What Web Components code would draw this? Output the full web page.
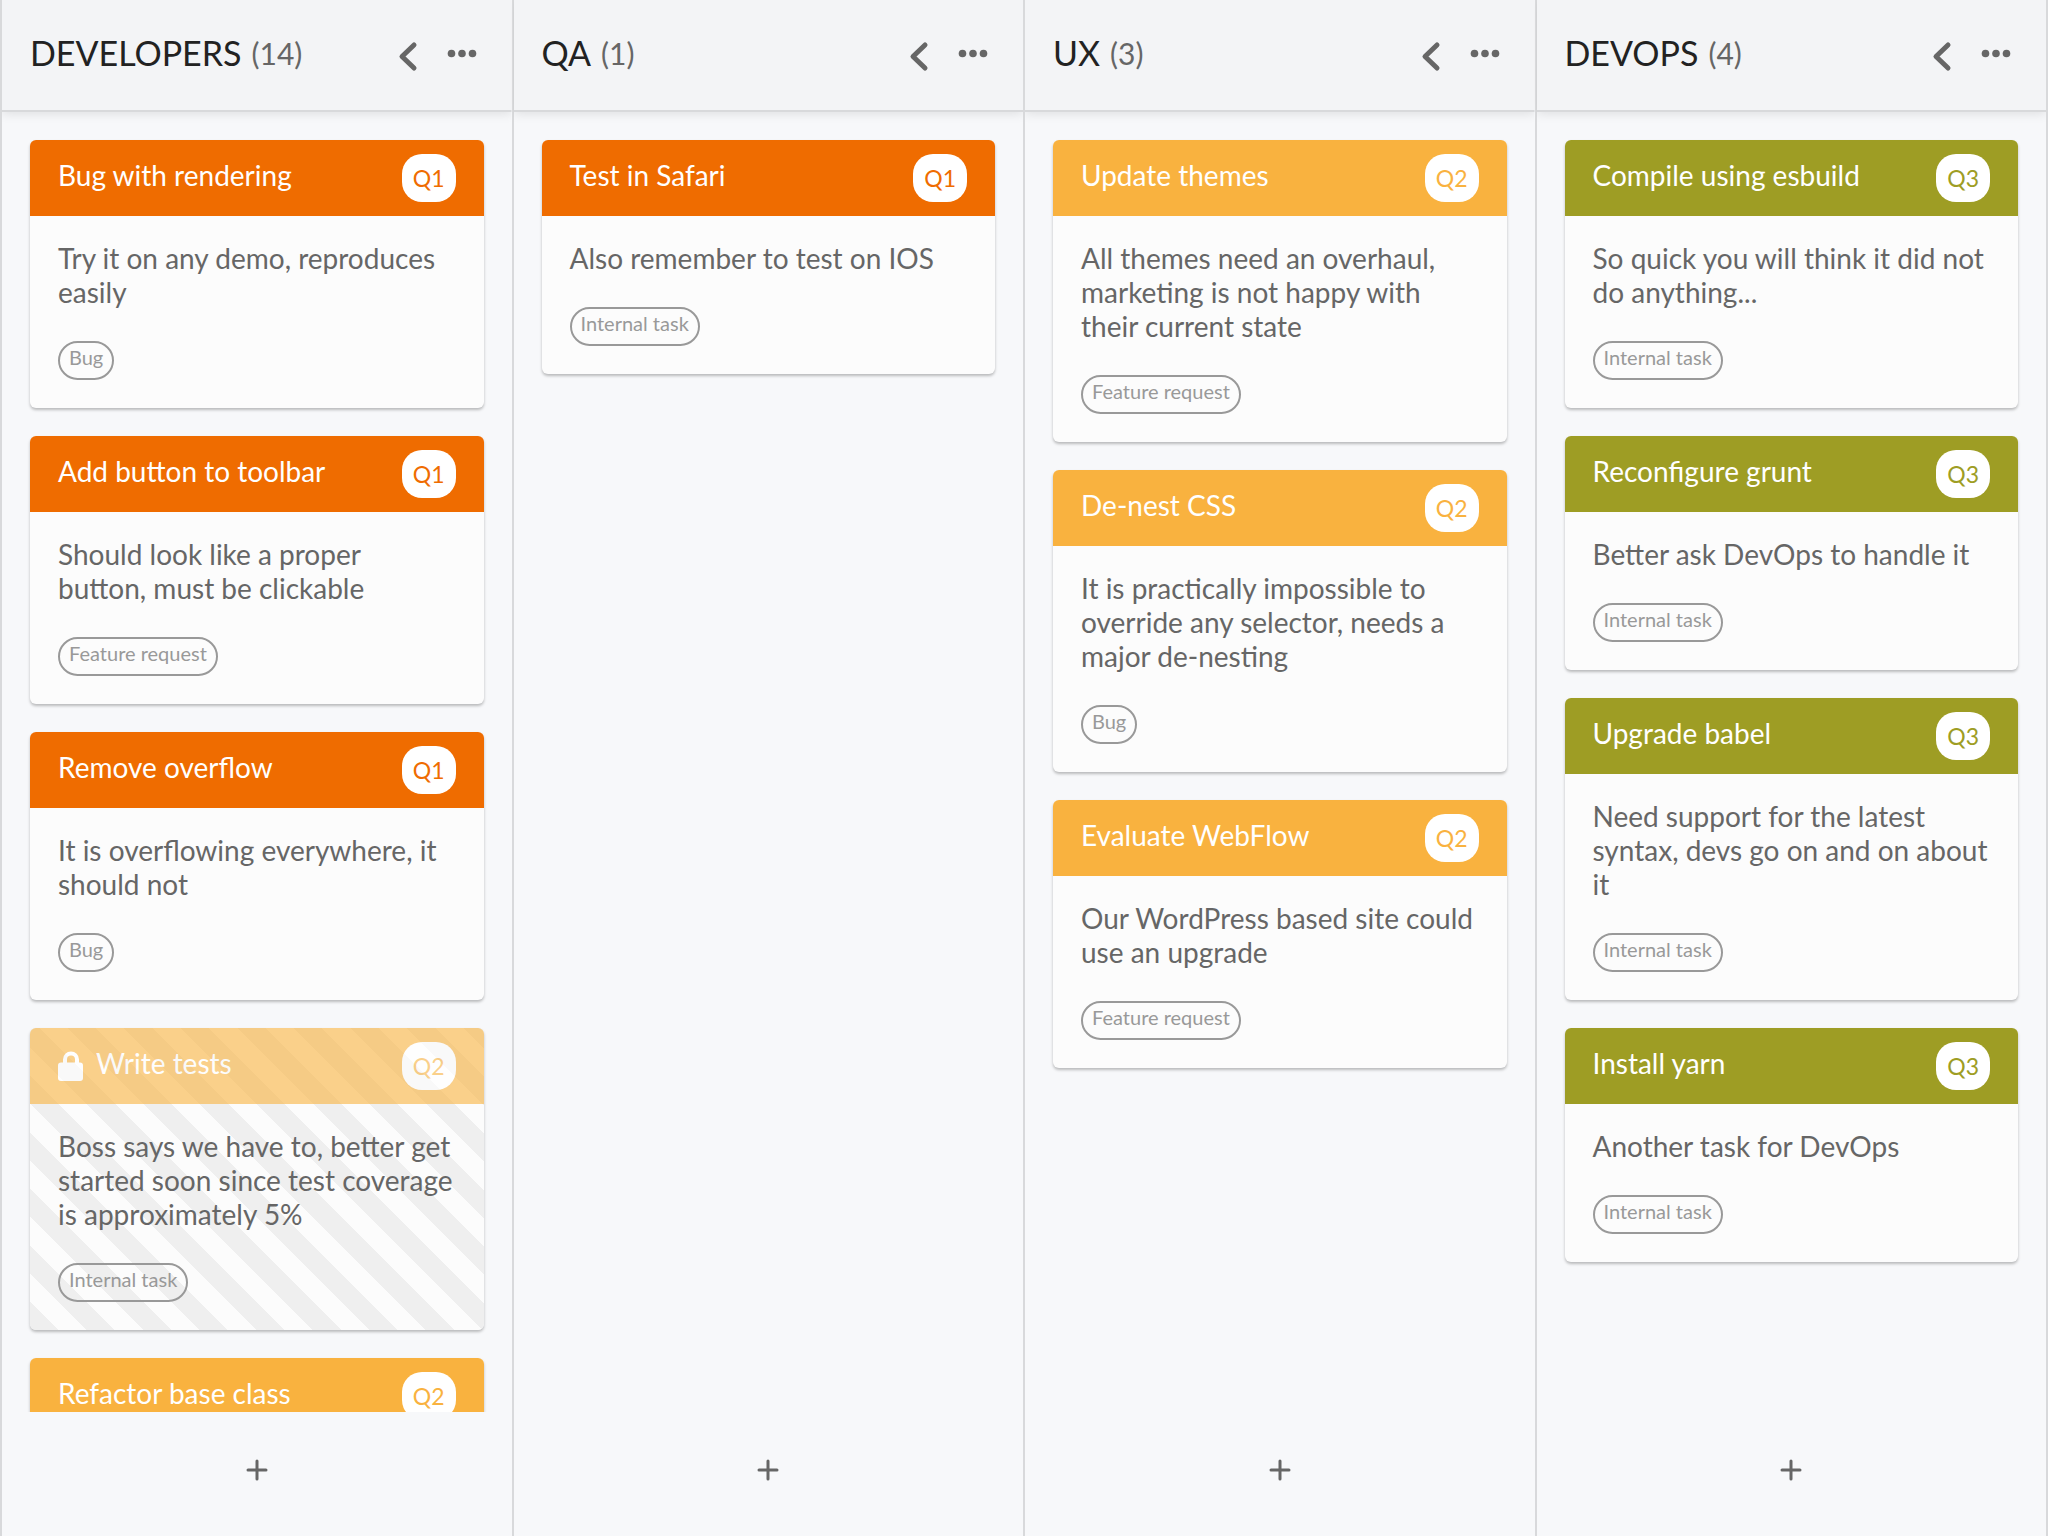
<!DOCTYPE html>
<html lang="en">
<head>
<meta charset="utf-8">
<title>Task board</title>
<style>
  body {
    margin: 0;
    font-family: Lato, "Liberation Sans", sans-serif;
    font-size: 28px;
    line-height: 34px;
    color: #666;
    background: #f7f8fa;
  }
</style>
</head>
<body>

<task-board>
  <board-column name="DEVELOPERS" count="14">
    <task-card title-text="Bug with rendering" prio="Q1" tag="Bug">Try it on any demo, reproduces easily</task-card>
    <task-card title-text="Add button to toolbar" prio="Q1" tag="Feature request">Should look like a proper button, must be clickable</task-card>
    <task-card title-text="Remove overflow" prio="Q1" tag="Bug">It is overflowing everywhere, it should not</task-card>
    <task-card title-text="Write tests" prio="Q2" tag="Internal task" locked>Boss says we have to, better get started soon since test coverage is approximately 5%</task-card>
    <task-card title-text="Refactor base class" prio="Q2"></task-card>
  </board-column>

  <board-column name="QA" count="1">
    <task-card title-text="Test in Safari" prio="Q1" tag="Internal task">Also remember to test on IOS</task-card>
  </board-column>

  <board-column name="UX" count="3">
    <task-card title-text="Update themes" prio="Q2" tag="Feature request">All themes need an overhaul, marketing is not happy with their current state</task-card>
    <task-card title-text="De-nest CSS" prio="Q2" tag="Bug">It is practically impossible to override any selector, needs a major de-nesting</task-card>
    <task-card title-text="Evaluate WebFlow" prio="Q2" tag="Feature request">Our WordPress based site could use an upgrade</task-card>
  </board-column>

  <board-column name="DEVOPS" count="4">
    <task-card title-text="Compile using esbuild" prio="Q3" tag="Internal task">So quick you will think it did not do anything...</task-card>
    <task-card title-text="Reconfigure grunt" prio="Q3" tag="Internal task">Better ask DevOps to handle it</task-card>
    <task-card title-text="Upgrade babel" prio="Q3" tag="Internal task">Need support for the latest syntax, devs go on and on about it</task-card>
    <task-card title-text="Install yarn" prio="Q3" tag="Internal task">Another task for DevOps</task-card>
  </board-column>
</task-board>

<script>
const boardTemplate = document.createElement('template');
boardTemplate.innerHTML = `
  <style>
    :host {
      display: grid;
      grid-template-columns: repeat(4, minmax(0, 1fr));
      height: 100vh;
      box-sizing: border-box;
      border-left: 2px solid #d8d9db;
      overflow: hidden;
    }
  </style>
  <slot></slot>
`;

const columnTemplate = document.createElement('template');
columnTemplate.innerHTML = `
  <style>
    :host {
      display: flex;
      flex-direction: column;
      min-height: 0;
      border-right: 2px solid #d8d9db;
    }

    header {
      display: flex;
      align-items: center;
      gap: 10px;
      padding: 32px 28px 36px;
      background: #f3f4f6;
      border-bottom: 2px solid #d8d9db;
      box-shadow: 0 2px 10px rgba(0, 0, 0, .1);
      clip-path: inset(0 0 -16px 0);
    }

    h2 {
      margin: 0;
      font-size: 34px;
      line-height: 42px;
      font-weight: 400;
      color: #222;
    }

    .count {
      flex: 1;
      font-size: 30px;
    }

    button {
      display: flex;
      align-items: center;
      justify-content: center;
      padding: 0;
      border: 0;
      background: none;
      color: #666;
      cursor: pointer;
    }

    header button {
      width: 44px;
      height: 42px;
    }

    .cards {
      flex: 1;
      min-height: 0;
      display: flex;
      flex-direction: column;
      gap: 28px;
      padding: 28px 28px 0;
      overflow: hidden;
    }

    footer {
      display: flex;
      justify-content: center;
      padding: 26px 28px 34px;
    }

    footer button {
      width: 64px;
      height: 64px;
    }
  </style>
  <header>
    <h2></h2>
    <span class="count"></span>
    <button class="collapse" aria-label="Collapse column">
      <svg width="24" height="42" viewBox="0 0 24 42" fill="none" stroke="currentColor" stroke-width="5" stroke-linecap="round" stroke-linejoin="round"><path d="M18 13 L6 24.500 L18 36"/></svg>
    </button>
    <button class="menu" aria-label="Column menu">
      <svg width="32" height="42" viewBox="0 0 32 42" fill="currentColor"><circle cx="5.500" cy="21.500" r="3.800"/><circle cx="16" cy="21.500" r="3.800"/><circle cx="26.500" cy="21.500" r="3.800"/></svg>
    </button>
  </header>
  <div class="cards"><slot></slot></div>
  <footer>
    <button class="add" aria-label="Add task">
      <svg width="22" height="22" viewBox="0 0 22 22" fill="none" stroke="currentColor" stroke-width="3" stroke-linecap="round"><path d="M11 2 V20 M2 11 H20"/></svg>
    </button>
  </footer>
`;

const cardTemplate = document.createElement('template');
cardTemplate.innerHTML = `
  <style>
    :host {
      --prio: #ef6c00;
      display: block;
      flex: none;
      border-radius: 6px;
      overflow: hidden;
      background: #fcfcfc;
      box-shadow: 0 2px 3px rgba(0, 0, 0, .25);
    }

    :host([prio="Q2"]) {
      --prio: #f9b23f;
    }

    :host([prio="Q3"]) {
      --prio: #9e9d24;
    }

    :host([locked]) {
      background: repeating-linear-gradient(45deg, #efefef 0 20px, #fcfcfc 20px 40px);
    }

    :host([locked]) header {
      opacity: .6;
    }

    header {
      display: flex;
      align-items: center;
      gap: 12px;
      padding: 14px 28px;
      background: var(--prio);
      color: #fff;
    }

    h3 {
      flex: 1;
      margin: 0 0 6px;
      font-size: 28px;
      line-height: 34px;
      font-weight: 400;
    }

    .lock {
      display: none;
    }

    :host([locked]) .lock {
      display: block;
    }

    .badge {
      padding: 0 11px;
      border-radius: 20px;
      background: #fff;
      color: var(--prio);
      font-size: 23px;
      line-height: 48px;
    }

    .body {
      display: flex;
      flex-direction: column;
      align-items: flex-start;
      gap: 32px;
      padding: 25px 28px 28px;
    }

    p {
      margin: 0;
    }

    .tag {
      padding: 2px 9px 9px;
      border: 2px solid #999;
      border-radius: 20px;
      color: #999;
      font-size: 20px;
      line-height: 24px;
    }

    .tag:empty {
      display: none;
    }
  </style>
  <header>
    <svg class="lock" width="26" height="30" viewBox="0 0 26 30"><path d="M7 13 V8.500 a6 6 0 0 1 12 0 V13" fill="none" stroke="#fff" stroke-width="4"/><rect x="0" y="11.500" width="25" height="18.500" rx="3" fill="#fff"/></svg>
    <h3></h3>
    <span class="badge"></span>
  </header>
  <div class="body">
    <p><slot></slot></p>
    <span class="tag"></span>
  </div>
`;

class TaskBoard extends HTMLElement {
  constructor() {
    super();
    this.attachShadow({ mode: 'open' });
    this.shadowRoot.appendChild(boardTemplate.content.cloneNode(true));
  }
}

class BoardColumn extends HTMLElement {
  constructor() {
    super();
    this.attachShadow({ mode: 'open' });
    this.shadowRoot.appendChild(columnTemplate.content.cloneNode(true));
  }

  addCard() {
    const card = document.createElement('task-card');
    card.setAttribute('title-text', 'New task');
    card.setAttribute('prio', 'Q1');
    this.appendChild(card);
    this.setAttribute('count', Number(this.getAttribute('count')) + 1);
    this.showCount();
  }

  toggle() {
    const cards = this.shadowRoot.querySelector('.cards');
    cards.style.visibility = cards.style.visibility === 'hidden' ? '' : 'hidden';
  }

  showCount() {
    this.shadowRoot.querySelector('.count').textContent = `(${this.getAttribute('count')})`;
  }

  connectedCallback() {
    this.shadowRoot.querySelector('h2').textContent = this.getAttribute('name');
    this.showCount();
    this.shadowRoot.querySelector('.add').addEventListener('click', () => this.addCard());
    this.shadowRoot.querySelector('.collapse').addEventListener('click', () => this.toggle());
  }
}

class TaskCard extends HTMLElement {
  constructor() {
    super();
    this.attachShadow({ mode: 'open' });
    this.shadowRoot.appendChild(cardTemplate.content.cloneNode(true));
  }

  connectedCallback() {
    this.shadowRoot.querySelector('h3').textContent = this.getAttribute('title-text');
    this.shadowRoot.querySelector('.badge').textContent = this.getAttribute('prio');
    this.shadowRoot.querySelector('.tag').textContent = this.getAttribute('tag') || '';
  }
}

window.customElements.define('task-board', TaskBoard);
window.customElements.define('board-column', BoardColumn);
window.customElements.define('task-card', TaskCard);
</script>
</body>
</html>
